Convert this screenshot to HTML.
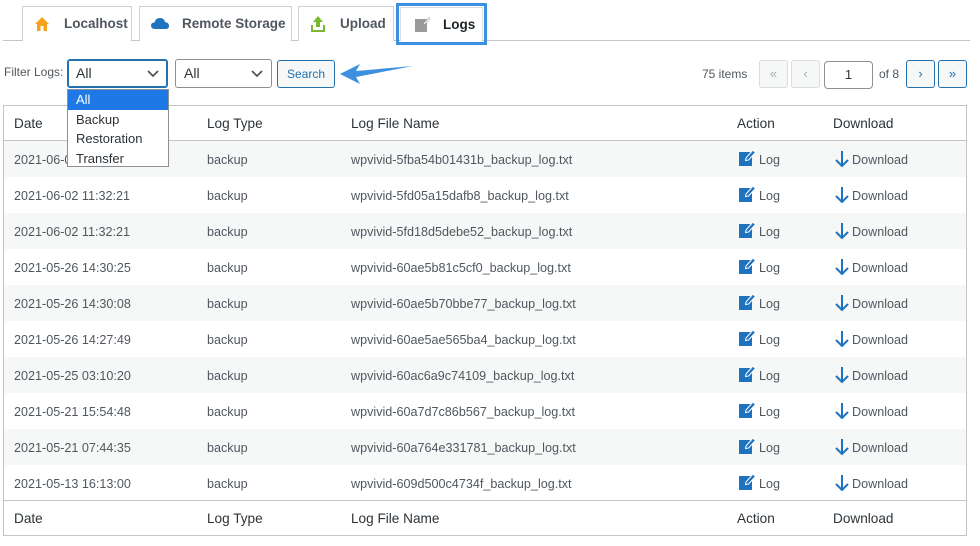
<!DOCTYPE html>
<html><head><meta charset="utf-8"><style>
*{box-sizing:border-box;margin:0;padding:0}
body{width:980px;height:546px;background:#fff;font-family:"Liberation Sans",sans-serif;color:#3c434a;position:relative;overflow:hidden;font-size:13px}
.a{position:absolute}
.tab{position:absolute;top:6px;height:35px;border:1px solid #d0d0d0;border-bottom:none;background:#fff;font-weight:bold;font-size:13.5px;color:#50575e;line-height:34px}
.sel{position:absolute;top:59px;height:29px;border:1px solid #8c8f94;border-radius:3px;background:#fff;font-size:14px;line-height:27px;padding-left:8px;color:#2c3338}
.chev{position:absolute;right:8px;top:6px}
.pb{position:absolute;top:60px;width:29px;height:28px;border-radius:3px;text-align:center;line-height:26px;font-size:13px}
.row{position:absolute;left:4px;width:962px;height:36px;font-size:12.6px;color:#50575e}
.row span{position:absolute;top:12px}
.hd span{font-size:13.6px;color:#2c3338;top:10px}
</style></head><body>
<div class="a" style="left:3px;top:40px;width:967px;height:1px;background:#c3c4c7"></div>
<div class="tab" style="left:22px;width:110px"><svg class="a" style="left:11px;top:9px" width="16" height="16" viewBox="0 0 16 16"><path d="M8 1 L15 8 L13 8 L13 15 L3 15 L3 8 L1 8 Z" fill="#f7a21b"/><rect x="6.5" y="10" width="3" height="5" fill="#fff"/></svg><span class="a" style="left:41px">Localhost</span></div>
<div class="tab" style="left:139px;width:153px"><svg class="a" style="left:11px;top:10px" width="18" height="13" viewBox="0 0 18 13"><path d="M4 12 Q0 12 0 8.5 Q0 5.5 3.5 5.5 Q4.5 1 9 1 Q13 1 14 5 Q18 5.5 18 9 Q18 12 14.5 12 Z" fill="#1e73be"/></svg><span class="a" style="left:42px">Remote Storage</span></div>
<div class="tab" style="left:298px;width:96px"><svg class="a" style="left:11px;top:8px" width="16" height="18" viewBox="0 0 16 18"><path d="M8 1 L13 7 L10 7 L10 12 L6 12 L6 7 L3 7 Z" fill="#7ab831"/><path d="M1 10 L1 17 L15 17 L15 10 L13 10 L13 15 L3 15 L3 10 Z" fill="#7ab831"/></svg><span class="a" style="left:41px">Upload</span></div>
<div class="a" style="left:396px;top:3px;width:91px;height:42px;border:3px solid #3d8fe0"></div>
<div class="tab" style="left:400px;top:7px;width:83px;height:34px;border-color:#ddd;color:#1d2327"><svg class="a" style="left:13px;top:7px" width="18" height="18" viewBox="0 0 18 18"><rect x="1" y="4" width="12" height="13" fill="#9a9a9a"/><path d="M9 9 L15 2 L16.5 3.5 L10.5 10 Z" fill="#9a9a9a"/><path d="M10 9 L15.5 3" stroke="#fff" stroke-width="1"/></svg><span class="a" style="left:42px">Logs</span></div>

<div class="a" style="left:4px;top:65px;font-size:12px;color:#50575e">Filter Logs:</div>
<div class="sel" style="left:67px;width:101px;border-color:#2271b1;box-shadow:0 0 0 1px #2271b1 inset">All<svg class="chev" width="12" height="14" viewBox="0 0 12 14"><path d="M1 5 L6 10 L11 5" fill="none" stroke="#50575e" stroke-width="1.8"/></svg></div>
<div class="sel" style="left:175px;width:97px">All<svg class="chev" width="12" height="14" viewBox="0 0 12 14"><path d="M1 5 L6 10 L11 5" fill="none" stroke="#50575e" stroke-width="1.8"/></svg></div>
<div class="a" style="left:277px;top:60px;width:58px;height:28px;border:1px solid #2271b1;border-radius:3px;background:#f6f7f7;color:#2271b1;text-align:center;line-height:26px;font-size:12px">Search</div>
<svg class="a" style="left:338px;top:63px" width="76" height="22" viewBox="0 0 76 22"><path d="M2 11 L22 1 L18 8 L75 3 L18 14 L22 21 Z" fill="#3d8fe0"/></svg>

<div class="a" style="left:702px;top:67px;font-size:12px;color:#50575e">75 items</div>
<div class="pb" style="left:759px;border:1px solid #dcdcde;background:#f6f7f7;color:#a7aaad">«</div>
<div class="pb" style="left:791px;border:1px solid #dcdcde;background:#f6f7f7;color:#a7aaad">‹</div>
<div class="a" style="left:824px;top:61px;width:49px;height:28px;border:1px solid #8c8f94;border-radius:4px;text-align:center;line-height:26px;font-size:13px;color:#2c3338">1</div>
<div class="a" style="left:879px;top:67px;font-size:12px;color:#50575e">of 8</div>
<div class="pb" style="left:906px;border:1px solid #2271b1;background:#f6f7f7;color:#2271b1">›</div>
<div class="pb" style="left:938px;border:1px solid #2271b1;background:#f6f7f7;color:#2271b1">»</div>

<div class="a" style="left:3px;top:105px;width:964px;height:431px;border:1px solid #c3c4c7"></div>
<div class="row hd" style="top:106px;height:35px;border-bottom:1px solid #c3c4c7"><span style="left:10px">Date</span><span style="left:203px">Log Type</span><span style="left:347px">Log File Name</span><span style="left:733px">Action</span><span style="left:829px">Download</span></div>
<div id="rows"></div>
<div class="row hd" style="top:500px;height:35px;border-top:1px solid #c3c4c7"><span style="left:10px">Date</span><span style="left:203px">Log Type</span><span style="left:347px">Log File Name</span><span style="left:733px">Action</span><span style="left:829px">Download</span></div>

<div class="a" style="left:67px;top:89px;width:102px;height:78px;border:1px solid #8c8f94;background:#fff;font-size:13px;color:#2c3338;line-height:19.5px">
<div style="background:#1e78e6;color:#fff;padding-left:8px">All</div>
<div style="padding-left:8px">Backup</div>
<div style="padding-left:8px">Restoration</div>
<div style="padding-left:8px">Transfer</div>
</div>
<script>
var d=[["2021-06-02 11:32:21","5fba54b01431b"],["2021-06-02 11:32:21","5fd05a15dafb8"],["2021-06-02 11:32:21","5fd18d5debe52"],["2021-05-26 14:30:25","60ae5b81c5cf0"],["2021-05-26 14:30:08","60ae5b70bbe77"],["2021-05-26 14:27:49","60ae5ae565ba4"],["2021-05-25 03:10:20","60ac6a9c74109"],["2021-05-21 15:54:48","60a7d7c86b567"],["2021-05-21 07:44:35","60a764e331781"],["2021-05-13 16:13:00","609d500c4734f"]];
var h="";
d.forEach(function(r,i){
h+='<div class="row" style="top:'+(141+i*36)+'px;background:'+(i%2?'#fff':'#f6f7f7')+'"><span style="left:10px">'+r[0]+'</span><span style="left:203px">backup</span><span style="left:347px">wpvivid-'+r[1]+'_backup_log.txt</span>'+
'<svg style="position:absolute;left:734px;top:7px" width="18" height="19" viewBox="0 0 18 19"><rect x="1" y="4" width="13" height="14" fill="#1e73be"/><path d="M8 10 L15 2 L17.5 4.5 L10.5 12 L7.5 12.5 Z" fill="#1e73be" stroke="#fff" stroke-width="1"/></svg><span style="left:755px">Log</span>'+
'<svg style="position:absolute;left:831px;top:9px" width="14" height="18" viewBox="0 0 14 18"><path d="M7 1 L7 16 M1 10 L7 16 L13 10" fill="none" stroke="#1e73be" stroke-width="2"/></svg><span style="left:848px">Download</span></div>';});
document.getElementById("rows").outerHTML=h;
</script>
</body></html>
